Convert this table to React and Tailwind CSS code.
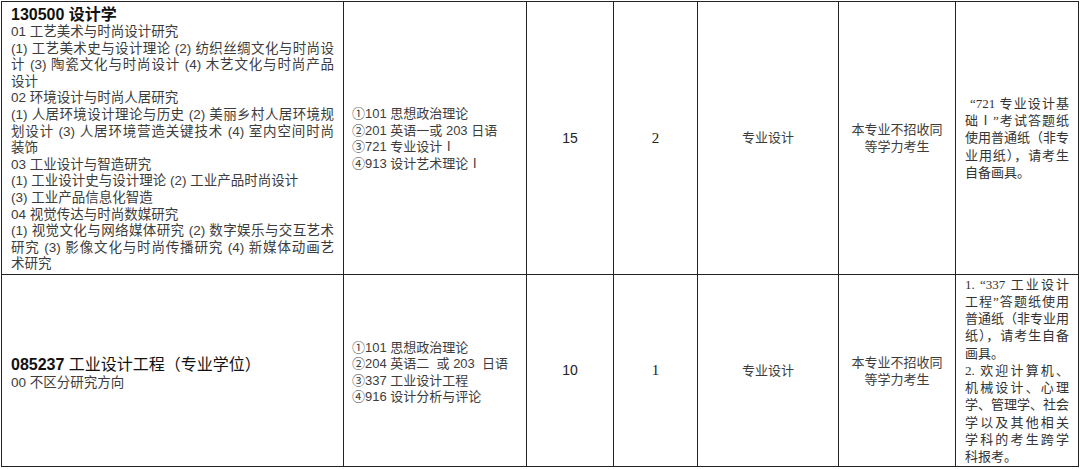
import clsx from 'clsx'

// rows of the admission table, lines broken as in the source document
const DIRECTIONS = [
    { t: '01 工艺美术与时尚设计研究' },
    { t: '(1) 工艺美术史与设计理论 (2) 纺织丝绸文化与时尚设', j: true },
    { t: '计 (3) 陶瓷文化与时尚设计 (4) 木艺文化与时尚产品', j: true },
    { t: '设计' },
    { t: '02 环境设计与时尚人居研究' },
    { t: '(1) 人居环境设计理论与历史 (2) 美丽乡村人居环境规', j: true },
    { t: '划设计 (3) 人居环境营造关键技术 (4) 室内空间时尚', j: true },
    { t: '装饰' },
    { t: '03 工业设计与智造研究' },
    { t: '(1) 工业设计史与设计理论 (2) 工业产品时尚设计' },
    { t: '(3) 工业产品信息化智造' },
    { t: '04 视觉传达与时尚数媒研究' },
    { t: '(1) 视觉文化与网络媒体研究 (2) 数字娱乐与交互艺术', j: true },
    { t: '研究 (3) 影像文化与时尚传播研究 (4) 新媒体动画艺', j: true },
    { t: '术研究' },
]

const NOTE_1 = [
    { t: '\u201c721 专业设计基', j: true, indent: true },
    { t: '础Ⅰ\u201d考试答题纸', j: true },
    { t: '使用普通纸（非专', j: true },
    { t: '业用纸），请考生', j: true },
    { t: '自备画具。' },
]

const NOTE_2 = [
    { t: '1. \u201c337 工业设计', j: true },
    { t: '工程\u201d答题纸使用', j: true },
    { t: '普通纸（非专业用', j: true },
    { t: '纸），请考生自备', j: true },
    { t: '画具。' },
    { t: '2. 欢迎计算机、', j: true },
    { t: '机械设计、心理', j: true },
    { t: '学、管理学、社会', j: true },
    { t: '学以及其他相关', j: true },
    { t: '学科的考生跨学', j: true },
    { t: '科报考。' },
]

const Lines = ({ lines }) => (
    <>
        {lines.map((l, i) => (
            <div
                key={i}
                className={clsx(l.j && '[text-align-last:justify] [text-justify:inter-character]', l.indent && 'pl-[5px]')}
            >
                {l.t}
            </div>
        ))}
    </>
)

const cell = 'border border-[#222] p-0'

const Exams = ({ items }) => (
    <div className="pl-[8px] text-[13px] leading-[16.5px] text-[#3c3c3c] whitespace-pre">
        {items.map((s, i) => <div key={i}>{s}</div>)}
    </div>
)

const Shared = ({ noteLines }) => (
    <>
        <td className={clsx(cell, 'text-center align-middle text-[13px] text-[#3c3c3c]')}>专业设计</td>
        <td className={clsx(cell, 'text-center align-middle text-[13px] leading-[17px] text-[#3c3c3c]')}>
            <div>本专业不招收同</div>
            <div>等学力考生</div>
        </td>
        <td className={clsx(cell, 'align-middle')}>
            <div className="pl-[9px] pr-[9px] text-[13px] leading-[17.2px] text-[#333] font-['Liberation_Serif','Noto_Sans_CJK_SC',serif]">
                <Lines lines={noteLines} />
            </div>
        </td>
    </>
)

export default function App() {
    return (
        <div className="w-[1080px] h-[469px] overflow-hidden bg-white pt-[1px] pl-[1px] font-['Liberation_Sans','Noto_Sans_CJK_SC',sans-serif]">
            <table className="table-fixed border-collapse w-[1077px]">
                <colgroup>
                    <col className="w-[342px]" />
                    <col className="w-[183px]" />
                    <col className="w-[87px]" />
                    <col className="w-[84px]" />
                    <col className="w-[141px]" />
                    <col className="w-[117px]" />
                    <col className="w-[123px]" />
                </colgroup>
                <tbody>
                    <tr className="h-[273px]">
                        <td className={clsx(cell, 'align-top')}>
                            <div className="pl-[9px] pr-[9px] pt-[3px]">
                                <div className="text-[16px] leading-[19px] font-bold text-[#111]">130500 设计学</div>
                                <div className="text-[13.5px] leading-[16.6px] text-[#3c3c3c]">
                                    <Lines lines={DIRECTIONS} />
                                </div>
                            </div>
                        </td>
                        <td className={clsx(cell, 'align-middle')}>
                            <div className="pt-[2px]">
                                <Exams items={['①101 思想政治理论', '②201 英语一或 203 日语', '③721 专业设计Ⅰ', '④913 设计艺术理论Ⅰ']} />
                            </div>
                        </td>
                        <td className={clsx(cell, 'text-center align-middle text-[14px] text-[#222]')}>15</td>
                        <td className={clsx(cell, "text-center align-middle text-[15px] text-[#222] font-['Liberation_Serif',serif]")}>2</td>
                        <Shared noteLines={NOTE_1} />
                    </tr>
                    <tr className="h-[192px]">
                        <td className={clsx(cell, 'align-middle')}>
                            <div className="pl-[9px] pt-[4px]">
                                <div className="text-[16px] leading-[19px] text-[#111]">
                                    <span className="font-bold">085237</span> 工业设计工程（专业学位）
                                </div>
                                <div className="text-[13.5px] leading-[17px] text-[#3c3c3c]">00 不区分研究方向</div>
                            </div>
                        </td>
                        <td className={clsx(cell, 'align-middle')}>
                            <div className="pt-[4px]">
                                <Exams items={['①101 思想政治理论', '②204 英语二  或 203  日语', '③337 工业设计工程', '④916 设计分析与评论']} />
                            </div>
                        </td>
                        <td className={clsx(cell, 'text-center align-middle text-[14px] text-[#222]')}>10</td>
                        <td className={clsx(cell, "text-center align-middle text-[15px] text-[#222] font-['Liberation_Serif',serif]")}>1</td>
                        <Shared noteLines={NOTE_2} />
                    </tr>
                </tbody>
            </table>
        </div>
    )
}
